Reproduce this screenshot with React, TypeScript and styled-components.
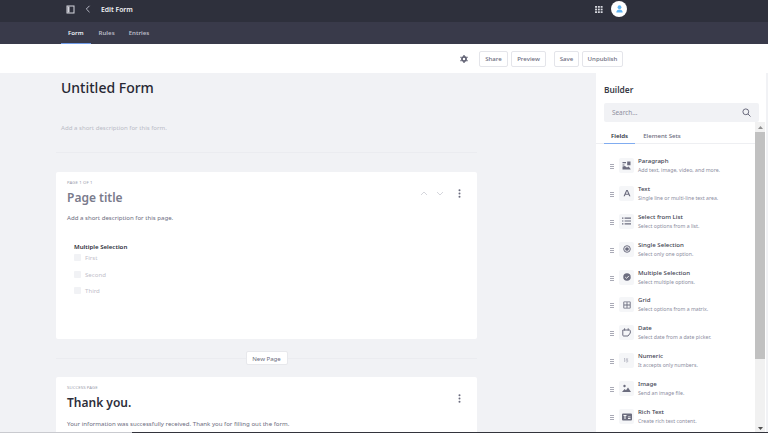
import React from "react";
import styled, { createGlobalStyle } from "styled-components";

const GlobalStyle = createGlobalStyle`
  html, body {
    margin: 0;
    padding: 0;
    background: #f1f2f5;
    font-family: "Noto Sans", "Open Sans", sans-serif;
    overflow: hidden;
  }
  * { box-sizing: border-box; }
`;

const Page = styled.div`
  width: 768px;
  height: 433px;
  display: flex;
  flex-direction: column;
  overflow: hidden;
  position: relative;
`;

const TopBar = styled.header`
  height: 22px;
  flex: none;
  background: #2e303c;
  display: flex;
  align-items: center;
  padding: 0 0 4px 66px;
  color: #fff;
`;

const BackGroup = styled.div`
  display: flex;
  align-items: center;
  gap: 10px;
`;

const TopTitle = styled.span`
  font-size: 6.8px;
  font-weight: 600;
  color: #f0f0f4;
  margin-left: 0;
`;

const TopRight = styled.div`
  margin-left: auto;
  margin-right: 141px;
  display: flex;
  align-items: center;
  gap: 8px;
`;

const Avatar = styled.div`
  width: 16px;
  height: 16px;
  border-radius: 50%;
  background: #fff;
  display: flex;
  align-items: center;
  justify-content: center;
`;

const NavBar = styled.nav`
  height: 22px;
  flex: none;
  background: #393a4a;
  display: flex;
  padding-left: 61px;
`;

const NavTab = styled.div<{ $active?: boolean }>`
  height: 22px;
  padding: 0 7px;
  font-size: 6.1px;
  font-weight: 600;
  line-height: 22px;
  color: ${(p) => (p.$active ? "#eef0f5" : "#b9bbc6")};
  border-bottom: 1px solid ${(p) => (p.$active ? "#6f9be8" : "transparent")};
  &:first-child { margin-right: 1px; }
`;

const Toolbar = styled.div`
  height: 29px;
  flex: none;
  background: #fff;
  display: flex;
  align-items: center;
  padding-left: 460px;
`;

const ToolGear = styled.div`
  width: 8px;
  margin-right: 11px;
  display: flex;
`;

const ToolButton = styled.button<{ $gap?: number; $width: number }>`
  height: 16px;
  width: ${(p) => p.$width}px;
  padding: 0;
  border: 1px solid #e4e5ea;
  border-radius: 2px;
  background: #fff;
  font-family: inherit;
  font-size: 6.1px;
  font-weight: 500;
  color: #6b6c7e;
  margin-right: ${(p) => p.$gap ?? 3}px;
`;

const Body = styled.div`
  flex: 1;
  min-height: 0;
  display: flex;
`;

const Main = styled.main`
  width: 596px;
  flex: none;
  padding: 0 119px 0 56px;
  overflow: hidden;
`;

const FormHead = styled.div`
  padding: 6px 0 0 5px;
  height: 80px;
  border-bottom: 1px solid #ebecf0;
`;

const FormTitle = styled.h1`
  margin: 0;
  font-size: 14px;
  line-height: 18px;
  font-weight: 500;
  color: #272833;
`;

const FormDesc = styled.p`
  margin: 26px 0 0;
  font-size: 6.1px;
  line-height: 9px;
  color: #b9bbc6;
`;

const Card = styled.section<{ $height: number }>`
  margin-top: ${(p) => (p.$height > 100 ? "19px" : "11px")};
  height: ${(p) => p.$height}px;
  background: #fff;
  border-radius: 2px;
  padding: 7px 11px;
  position: relative;
`;

const Eyebrow = styled.div`
  font-size: 4.3px;
  line-height: 6px;
  letter-spacing: 0.1px;
  color: #9a9bab;
  text-transform: uppercase;
`;

const CardTitle = styled.h2<{ $muted?: boolean }>`
  margin: 5px 0 0;
  font-size: 12px;
  line-height: 16px;
  font-weight: 600;
  color: ${(p) => (p.$muted ? "#7a7b8c" : "#2e2f3b")};
`;

const CardText = styled.p<{ $strong?: boolean }>`
  margin: ${(p) => (p.$strong ? "8px" : "7px")} 0 0;
  font-size: 6.1px;
  line-height: 9px;
  color: #6b6c7e;
`;

const CardActions = styled.div<{ $top: number }>`
  position: absolute;
  right: 16px;
  top: ${(p) => p.$top}px;
  display: flex;
  align-items: center;
  gap: 8px;
  svg:last-child { margin-left: 6px; }
`;

const Field = styled.div`
  margin: 20px 0 0 7px;
`;

const FieldLabel = styled.div`
  font-size: 6.1px;
  font-weight: 600;
  line-height: 9px;
  color: #2e2f3b;
`;

const OptionList = styled.div`
  display: flex;
  flex-direction: column;
  gap: 9.5px;
  margin-top: 3px;
`;

const Option = styled.div`
  display: flex;
  align-items: center;
  gap: 4px;
  height: 7px;
  font-size: 6.1px;
  color: #bfc0ca;
`;

const Check = styled.span`
  width: 7px;
  height: 7px;
  background: #f1f2f5;
  border-radius: 1px;
`;

const Divider = styled.div`
  margin-top: 11px;
  height: 16px;
  display: flex;
  align-items: center;
  justify-content: center;
  background: linear-gradient(#ebecf0, #ebecf0) center / 100% 1px no-repeat;
`;

const NewPage = styled.button`
  width: 42px;
  height: 14px;
  padding: 0;
  border: 1px solid #e7e8ec;
  border-radius: 2px;
  background: #fff;
  font-family: inherit;
  font-size: 6.1px;
  color: #6b6c7e;
`;

const Builder = styled.aside`
  width: 170px;
  flex: none;
  background: #fff;
  display: flex;
  flex-direction: column;
  min-height: 0;
`;

const BuilderHead = styled.div`
  padding: 11px 7px 0 8px;
  flex: none;
`;

const BuilderTitle = styled.h3`
  margin: 0;
  font-size: 8.4px;
  line-height: 11px;
  font-weight: 600;
  color: #3a3b47;
`;

const Search = styled.div`
  margin-top: 8px;
  height: 19px;
  background: #f1f2f5;
  border-radius: 2px;
  display: flex;
  align-items: center;
  justify-content: space-between;
  padding: 0 8px;
  font-size: 6.4px;
  color: #8e8f9f;
`;

const BuilderBody = styled.div`
  flex: 1;
  min-height: 0;
  display: flex;
`;

const BuilderContent = styled.div`
  flex: 1;
  min-width: 0;
  overflow: hidden;
`;

const Tabs = styled.div`
  height: 22px;
  display: flex;
  padding-left: 8px;
  border-bottom: 1px solid #eeeff2;
`;

const Tab = styled.div<{ $active?: boolean }>`
  padding: 5px 7px 0;
  margin-right: 1px;
  font-size: 6.1px;
  font-weight: ${(p) => (p.$active ? 600 : 500)};
  line-height: 17px;
  height: 22px;
  color: ${(p) => (p.$active ? "#2e2f3b" : "#6b6c7e")};
  border-bottom: 1px solid ${(p) => (p.$active ? "#80acf0" : "transparent")};
`;

const FieldList = styled.div`
  padding-top: 14px;
`;

const FieldRow = styled.div`
  height: 27.9px;
  display: flex;
  align-items: flex-start;
  padding-left: 14px;
`;

const Grip = styled.div`
  width: 4px;
  margin-top: 6px;
  flex: none;
  display: flex;
  flex-direction: column;
  gap: 1px;
  span {
    height: 1px;
    background: #a9aab6;
  }
`;

const IconTile = styled.div`
  width: 15px;
  height: 15px;
  flex: none;
  margin: 0 4px 0 5px;
  border-radius: 2px;
  background: #f5f6f8;
  display: flex;
  align-items: center;
  justify-content: center;
  color: #6b6c7e;
`;

const FieldText = styled.div`
  min-width: 0;
`;

const FieldName = styled.div`
  font-size: 6.1px;
  font-weight: 500;
  line-height: 8px;
  color: #40414f;
  margin-top: -1px;
`;

const FieldHelp = styled.div`
  font-size: 5.2px;
  line-height: 8px;
  margin-top: 1px;
  white-space: nowrap;
  color: #8c8da0;
`;

const Scrollbar = styled.div`
  width: 10px;
  flex: none;
  background: #f1f1f1;
  display: flex;
  flex-direction: column;
  align-items: center;
  margin-right: 1px;
`;

const ScrollArrow = styled.div`
  height: 10px;
  flex: none;
  display: flex;
  align-items: center;
  justify-content: center;
`;

const ScrollThumb = styled.div`
  width: 100%;
  height: 227px;
  flex: none;
  background: #c1c1c1;
`;

const ScrollGap = styled.div`
  flex: 1;
`;

const TaskStrip = styled.div`
  position: absolute;
  left: 0;
  right: 0;
  bottom: 0;
  height: 1px;
  background: linear-gradient(90deg, #c9cacf 132px, #33343c 132px);
`;

const Chevron = ({ up }: { up?: boolean }) => (
  <svg width="8" height="5" viewBox="0 0 8 5" fill="none" stroke="#d5d6dc" strokeWidth="1">
    <path d={up ? "M1 4l3-3 3 3" : "M1 1l3 3 3-3"} />
  </svg>
);

const Kebab = () => (
  <svg width="3" height="9" viewBox="0 0 3 9" fill="#6b6c7e">
    <circle cx="1.5" cy="1.2" r="1" />
    <circle cx="1.5" cy="4.5" r="1" />
    <circle cx="1.5" cy="7.8" r="1" />
  </svg>
);

const icons: Record<string, React.ReactNode> = {
  paragraph: (
    <svg width="9" height="9" viewBox="0 0 9 9" fill="currentColor">
      <path d="M0.5 1h3.5v1.2H0.5zM0.5 3.4h2v1.2h-2zM5.2 .6h3.3v3.6H5.2zM.5 5.6l2.4-.6L5 6.6l1.6-1.2 2 2.6v.6H.5z" />
    </svg>
  ),
  text: (
    <svg width="8" height="8" viewBox="0 0 9 9" fill="currentColor">
      <path d="M3.7 1h1.6L8.4 8.2H6.9l-.6-1.6H2.7L2.1 8.2H.6zM3.2 5.3h2.6L4.5 2.2z" />
    </svg>
  ),
  list: (
    <svg width="9" height="8" viewBox="0 0 9 8" fill="currentColor">
      <path d="M0 .5h1.4v1.2H0zM2.6 .5H9v1.2H2.6zM0 3.4h1.4v1.2H0zM2.6 3.4H9v1.2H2.6zM0 6.3h1.4v1.2H0zM2.6 6.3H9v1.2H2.6z" />
    </svg>
  ),
  radio: (
    <svg width="8" height="8" viewBox="0 0 9 9">
      <circle cx="4.5" cy="4.5" r="3.7" fill="none" stroke="currentColor" strokeWidth="1.1" />
      <circle cx="4.5" cy="4.5" r="2.1" fill="currentColor" />
    </svg>
  ),
  check: (
    <svg width="8" height="8" viewBox="0 0 9 9">
      <circle cx="4.5" cy="4.5" r="4.2" fill="currentColor" />
      <path d="M2.5 4.6l1.5 1.4 2.6-2.7" fill="none" stroke="#fff" strokeWidth="1" />
    </svg>
  ),
  grid: (
    <svg width="8" height="8" viewBox="0 0 9 9" fill="currentColor">
      <path d="M1.2 .5h6.6a.8.8 0 0 1 .8.8v6.4a.8.8 0 0 1-.8.8H1.2a.8.8 0 0 1-.8-.8V1.3a.8.8 0 0 1 .8-.8zM1.4 1.5v2.5h2.6V1.5zM5 1.5v2.5h2.6V1.5zM1.4 5v2.5h2.6V5zM5 5v2.5h2.6V5z" fillRule="evenodd" />
    </svg>
  ),
  date: (
    <svg width="9" height="9" viewBox="0 0 9 9" fill="none" stroke="currentColor" strokeWidth="1">
      <path d="M1 2h6.5a.8.8 0 0 1 .8.8V5L6 8H1.6a.8.8 0 0 1-.8-.8V2z" />
      <path d="M2.6 .3v2.2M6.2 .3v2.2" />
    </svg>
  ),
  numeric: (
    <svg width="7" height="5" viewBox="0 0 9 7" fill="none" stroke="#9a9bab" strokeWidth=".9">
      <path d="M1 1.2l1-.6v5M4 1.2h2.2L4.2 3.2c1.4-.3 2.2.2 2.2 1.2s-1.4 1.6-2.6 1" />
    </svg>
  ),
  image: (
    <svg width="9" height="9" viewBox="0 0 9 9" fill="currentColor">
      <circle cx="2.5" cy="2" r="1.2" />
      <path d="M0 8l2.6-3 1.4 1.2L6 3.4 9 8z" />
    </svg>
  ),
  rich: (
    <svg width="10" height="8" viewBox="0 0 10 8" fill="currentColor">
      <path d="M1 .5h8a1 1 0 0 1 1 1v5a1 1 0 0 1-1 1H1a1 1 0 0 1-1-1v-5a1 1 0 0 1 1-1zM1.5 2v1h3V2zM2.5 3v3h1V3zM6 3.4v.9h2.5v-.9zM6 5v.9h2.5V5z" fillRule="evenodd" />
    </svg>
  ),
};

const fields = [
  { icon: "paragraph", name: "Paragraph", help: "Add text, image, video, and more." },
  { icon: "text", name: "Text", help: "Single line or multi-line text area." },
  { icon: "list", name: "Select from List", help: "Select options from a list." },
  { icon: "radio", name: "Single Selection", help: "Select only one option." },
  { icon: "check", name: "Multiple Selection", help: "Select multiple options." },
  { icon: "grid", name: "Grid", help: "Select options from a matrix." },
  { icon: "date", name: "Date", help: "Select date from a date picker." },
  { icon: "numeric", name: "Numeric", help: "It accepts only numbers." },
  { icon: "image", name: "Image", help: "Send an image file." },
  { icon: "rich", name: "Rich Text", help: "Create rich text content." },
];

export default function App() {
  return (
    <Page>
      <GlobalStyle />
      <TopBar>
        <BackGroup>
          <svg width="9" height="9" viewBox="0 0 9 9" fill="none" stroke="#d5d6de">
            <rect x="1" y="1" width="7" height="7" strokeWidth="1" />
            <rect x="1.5" y="1.5" width="2" height="6" fill="#d5d6de" stroke="none" />
          </svg>
          <svg width="6" height="8" viewBox="0 0 6 8" fill="none" stroke="#b8bac6" strokeWidth="1">
            <path d="M4.5 .8L1.3 4l3.2 3.2" />
          </svg>
          <TopTitle>Edit Form</TopTitle>
        </BackGroup>
        <TopRight>
          <svg width="8" height="7" viewBox="0 0 9 8" fill="#d8d9e0">
            {[0, 3.2, 6.4].flatMap((x) =>
              [0, 3, 6].map((y) => <rect key={`${x}-${y}`} x={x} y={y} width="2.2" height="2" />)
            )}
          </svg>
          <Avatar>
            <svg width="7" height="8" viewBox="0 0 7 8" fill="#5fb4f2">
              <circle cx="3.5" cy="2.2" r="1.9" />
              <path d="M.3 7.6c0-2 1.4-3 3.2-3s3.2 1 3.2 3z" />
            </svg>
          </Avatar>
        </TopRight>
      </TopBar>
      <NavBar>
        <NavTab $active>Form</NavTab>
        <NavTab>Rules</NavTab>
        <NavTab>Entries</NavTab>
      </NavBar>
      <Toolbar>
        <ToolGear>
          <svg width="8" height="8" viewBox="0 0 8 8">
            <circle cx="4" cy="4" r="2.1" fill="none" stroke="#5f6072" strokeWidth="1.7" />
            <g stroke="#5f6072" strokeWidth="1.3">
              <path d="M4 0v1.2M4 6.8V8M.5 2l1 .6M6.5 5.4l1 .6M.5 6l1-.6M6.5 2.6l1-.6" />
            </g>
          </svg>
        </ToolGear>
        <ToolButton $width={29}>Share</ToolButton>
        <ToolButton $width={35} $gap={8}>Preview</ToolButton>
        <ToolButton $width={25}>Save</ToolButton>
        <ToolButton $width={41}>Unpublish</ToolButton>
      </Toolbar>
      <Body>
        <Main>
          <FormHead>
            <FormTitle>Untitled Form</FormTitle>
            <FormDesc>Add a short description for this form.</FormDesc>
          </FormHead>
          <Card $height={167}>
            <Eyebrow>Page 1 of 1</Eyebrow>
            <CardTitle $muted>Page title</CardTitle>
            <CardText>Add a short description for this page.</CardText>
            <CardActions $top={17}>
              <Chevron up />
              <Chevron />
              <Kebab />
            </CardActions>
            <Field>
              <FieldLabel>Multiple Selection</FieldLabel>
              <OptionList>
                <Option><Check />First</Option>
                <Option><Check />Second</Option>
                <Option><Check />Third</Option>
              </OptionList>
            </Field>
          </Card>
          <Divider>
            <NewPage>New Page</NewPage>
          </Divider>
          <Card $height={60}>
            <Eyebrow>Success Page</Eyebrow>
            <CardTitle>Thank you.</CardTitle>
            <CardText $strong>Your information was successfully received. Thank you for filling out the form.</CardText>
            <CardActions $top={17}>
              <Kebab />
            </CardActions>
          </Card>
        </Main>
        <Builder>
          <BuilderHead>
            <BuilderTitle>Builder</BuilderTitle>
            <Search>
              Search...
              <svg width="9" height="9" viewBox="0 0 9 9" fill="none" stroke="#6b6c7e" strokeWidth="1">
                <circle cx="3.8" cy="3.8" r="2.9" />
                <path d="M6 6l2.5 2.5" />
              </svg>
            </Search>
          </BuilderHead>
          <BuilderBody>
            <BuilderContent>
              <Tabs>
                <Tab $active>Fields</Tab>
                <Tab>Element Sets</Tab>
              </Tabs>
              <FieldList>
                {fields.map((f) => (
                  <FieldRow key={f.name}>
                    <Grip><span /><span /><span /></Grip>
                    <IconTile>{icons[f.icon]}</IconTile>
                    <FieldText>
                      <FieldName>{f.name}</FieldName>
                      <FieldHelp>{f.help}</FieldHelp>
                    </FieldText>
                  </FieldRow>
                ))}
              </FieldList>
            </BuilderContent>
            <Scrollbar>
              <ScrollArrow>
                <svg width="5" height="3" viewBox="0 0 5 3" fill="#8f8f8f"><path d="M0 3l2.5-3L5 3z" /></svg>
              </ScrollArrow>
              <ScrollThumb />
              <ScrollGap />
              <ScrollArrow>
                <svg width="5" height="3" viewBox="0 0 5 3" fill="#505050"><path d="M0 0l2.5 3L5 0z" /></svg>
              </ScrollArrow>
            </Scrollbar>
          </BuilderBody>
        </Builder>
      </Body>
      <TaskStrip />
    </Page>
  );
}
